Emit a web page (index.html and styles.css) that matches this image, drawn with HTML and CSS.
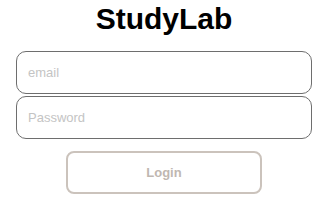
FILE: index.html
```html
<!DOCTYPE html>
<html>
<head>
<meta charset="utf-8">
<link rel="stylesheet" href="styles.css">
</head>
<body>
<main class="page">
  <h1 class="title">StudyLab</h1>
  <form class="form">
    <input class="field" type="text" placeholder="email">
    <input class="field" type="password" placeholder="Password">
    <button class="login" type="button">Login</button>
  </form>
</main>
</body>
</html>
```
FILE: styles.css
```css
html, body {
  margin: 0;
  padding: 0;
  background: #ffffff;
}
.page {
  width: 296px;
  margin-left: 16px;
  display: flex;
  flex-direction: column;
  align-items: center;
  font-family: "Liberation Sans", Arial, sans-serif;
}
.title {
  margin: 0;
  height: 51px;
  line-height: 37px;
  font-size: 30px;
  font-weight: bold;
  color: #000;
}
.form {
  width: 100%;
  display: flex;
  flex-direction: column;
  align-items: center;
  gap: 2px;
}
.field {
  box-sizing: border-box;
  width: 100%;
  height: 43px;
  border: 1px solid #6e6e6e;
  border-radius: 10px;
  padding: 0 11px;
  font-family: "Liberation Sans", Arial, sans-serif;
  font-size: 13px;
  color: #000;
  outline: none;
  background: #fff;
}
.field::placeholder {
  color: #c4c4c4;
}
.login {
  box-sizing: border-box;
  margin-top: 10px;
  width: 196px;
  height: 43px;
  border: 2px solid #cbc3bc;
  border-radius: 8px;
  background: #fff;
  color: #bfb7b1;
  font-family: "Liberation Sans", Arial, sans-serif;
  font-size: 13px;
  font-weight: bold;
}
```
